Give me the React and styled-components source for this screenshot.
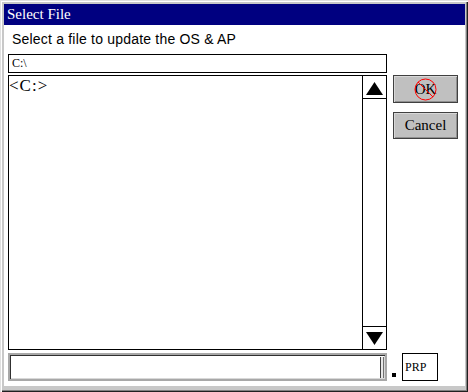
import React from 'react';
import styled, { createGlobalStyle } from 'styled-components';

const GlobalStyle = createGlobalStyle`
    html, body {
        margin: 0;
        padding: 0;
        background: #c0c0c0;
    }
    * {
        box-sizing: border-box;
    }
`

const Frame = styled.div`
    width: 468px;
    height: 392px;
    background: #c8c8c8;
    padding: 4px 3px 6px 4px;
    display: flex;
    flex-direction: column;
    box-shadow: inset 1px 1px 0 #e0e0e0, inset 2px 2px 0 #ffffff,
        inset -1px -1px 0 #202020, inset -2px -2px 0 #808080;
`

const TitleBar = styled.div`
    height: 21px;
    background: #000080;
    color: #ffffff;
    font-family: "Liberation Serif", serif;
    font-size: 15px;
    line-height: 21px;
    padding-left: 3px;
`

const Body = styled.div`
    flex: 1;
    background: #ffffff;
    padding: 4px 0 0 4px;
    display: flex;
    flex-direction: column;
`

const Subtitle = styled.div`
    height: 21px;
    line-height: 21px;
    padding-left: 4px;
    font-family: "Liberation Sans", sans-serif;
    font-size: 14px;
    letter-spacing: 0.2px;
    color: #000000;
`

const PathInput = styled.div`
    margin-top: 4px;
    width: 379px;
    height: 19px;
    border: 1px solid #000000;
    padding-left: 3px;
    font-family: "Liberation Serif", serif;
    font-size: 12px;
    line-height: 17px;
`

const MainRow = styled.div`
    display: flex;
    margin-top: 2px;
`

const ListBox = styled.div`
    width: 379px;
    height: 275px;
    border: 1px solid #000000;
    display: flex;
`

const ListContent = styled.div`
    flex: 1;
    padding-left: 0;
    font-family: "Liberation Serif", serif;
    font-size: 17px;
    letter-spacing: 1px;
    line-height: 19px;
`

const ScrollBar = styled.div`
    width: 24px;
    border-left: 1px solid #000000;
    display: flex;
    flex-direction: column;
`

const ArrowButton = styled.div`
    height: 23px;
    display: flex;
    align-items: center;
    justify-content: center;
    border-bottom: ${p => p.$down ? 'none' : '1px solid #000000'};
    border-top: ${p => p.$down ? '1px solid #000000' : 'none'};
    padding-top: ${p => p.$down ? '1px' : '2px'};
`

const Track = styled.div`
    flex: 1;
    background: #ffffff;
`

const ButtonColumn = styled.div`
    margin-left: 6px;
    display: flex;
    flex-direction: column;
    gap: 9px;
`

const DialogButton = styled.div`
    position: relative;
    width: 65px;
    height: ${p => p.$tall ? '28px' : '27px'};
    background: #c0c0c0;
    border: 1px solid #404040;
    box-shadow: inset 1px 1px 0 #d8d8d8, inset -1px -1px 0 #909090;
    display: flex;
    align-items: center;
    justify-content: center;
    font-family: "Liberation Serif", serif;
    font-size: 15px;
    color: #000000;
`

const NoSign = styled.svg`
    position: absolute;
    left: 20px;
    top: 2px;
`

const BottomRow = styled.div`
    display: flex;
    margin-top: 3px;
`

const BottomField = styled.div`
    width: 379px;
    height: 28px;
    border: 2px solid #a8a8a8;
    box-shadow: inset 1px 1px 0 #303030, inset -1px -1px 0 #d8d8d8;
    display: flex;
    justify-content: flex-end;
    padding: 2px 1px 1px 0;
`

const Grip = styled.div`
    width: 4px;
    border-left: 1px solid #404040;
    border-right: 1px solid #707070;
    background: #e8e8e8;
`

const Dot = styled.div`
    width: 4px;
    height: 4px;
    background: #000000;
    margin-left: 5px;
    align-self: flex-end;
    margin-bottom: 4px;
`

const ExtBox = styled.div`
    margin-left: 6px;
    width: 36px;
    height: 28px;
    border: 1px solid #000000;
    padding-left: 2px;
    font-family: "Liberation Serif", serif;
    font-size: 12px;
    line-height: 26px;
`

function Triangle({ down }) {
    return (
        <svg width="17" height="13" viewBox="0 0 17 13">
            {down
                ? <polygon points="0,0 17,0 8.5,13" fill="#000000" />
                : <polygon points="8.5,0 17,13 0,13" fill="#000000" />}
        </svg>
    )
}

function App() {
    return (
        <>
            <GlobalStyle />
            <Frame>
                <TitleBar>Select File</TitleBar>
                <Body>
                    <Subtitle>Select a file to update the OS &amp; AP</Subtitle>
                    <PathInput>C:\</PathInput>
                    <MainRow>
                        <ListBox>
                            <ListContent>&lt;C:&gt;</ListContent>
                            <ScrollBar>
                                <ArrowButton><Triangle /></ArrowButton>
                                <Track />
                                <ArrowButton $down><Triangle down /></ArrowButton>
                            </ScrollBar>
                        </ListBox>
                        <ButtonColumn>
                            <DialogButton $tall>
                                OK
                                <NoSign width="23" height="23" viewBox="0 0 23 23">
                                    <circle cx="11.5" cy="11.5" r="10.5" fill="none" stroke="#ff0000" strokeWidth="1" />
                                    <line x1="4" y1="4" x2="19" y2="19" stroke="#ff0000" strokeWidth="1" />
                                </NoSign>
                            </DialogButton>
                            <DialogButton>Cancel</DialogButton>
                        </ButtonColumn>
                    </MainRow>
                    <BottomRow>
                        <BottomField><Grip /></BottomField>
                        <Dot />
                        <ExtBox>PRP</ExtBox>
                    </BottomRow>
                </Body>
            </Frame>
        </>
    )
}

export default App;
